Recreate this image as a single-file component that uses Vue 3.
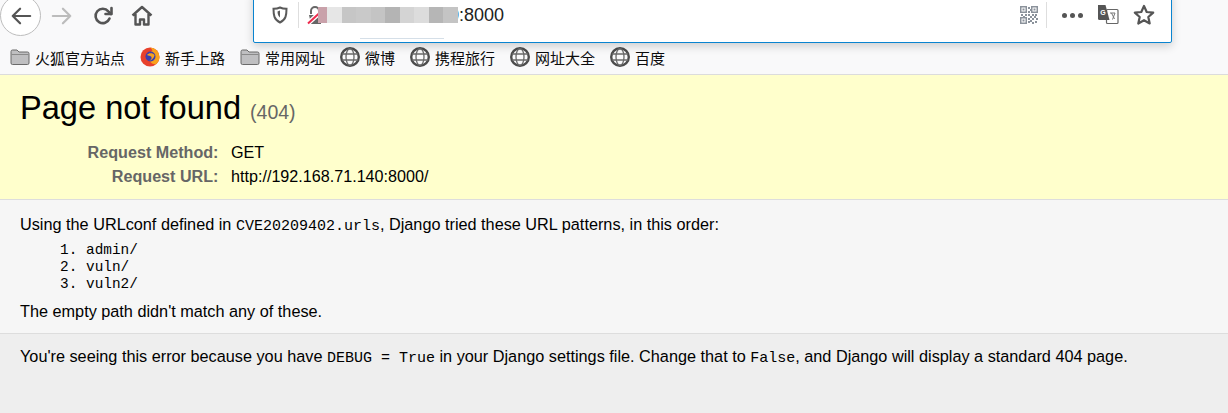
<script setup>
const bookmarks = [
  { label: '火狐官方站点', icon: 'folder' },
  { label: '新手上路', icon: 'fx' },
  { label: '常用网址', icon: 'folder' },
  { label: '微博', icon: 'globe' },
  { label: '携程旅行', icon: 'globe' },
  { label: '网址大全', icon: 'globe' },
  { label: '百度', icon: 'globe' },
]
const blur = ['#e6e6e6','#c6c6c6','#c9c9c9','#c4c4c4','#b4b4b4','#d4d4d4','#dcdcdc','#b6b6b6','#c4c4c4']
const patterns = ['admin/', 'vuln/', 'vuln2/']
const qrNoise = [[8,1],[10,3],[8,5],[1,8],[3,10],[5,8],[8,8],[10,10],[12,8],[15,8],[8,12],[10,14],[8,15],[12,12],[14,10],[16,12],[12,16],[15,15]]
</script>

<template>
  <div class="page">
    <header class="chrome">
      <div class="navrow">
        <div class="back">
          <svg width="22" height="22" viewBox="0 0 24 24" fill="none" stroke="#555" stroke-width="2.400" stroke-linecap="round" stroke-linejoin="round"><path d="M22 12H3M11 4l-8 8 8 8"/></svg>
        </div>
        <svg class="fwd" width="22" height="22" viewBox="0 0 24 24" fill="none" stroke="#bcbcbc" stroke-width="2.400" stroke-linecap="round" stroke-linejoin="round"><path d="M2 12h19M13 4l8 8-8 8"/></svg>
        <svg class="reload" width="22" height="22" viewBox="0 0 22 22" fill="none" stroke="#555" stroke-width="2.600" stroke-linecap="round" stroke-linejoin="round"><path d="M17.500 13.500a7.200 7.200 0 1 1-1.200-7.200L19 9"/><path d="M19.500 3v6h-6"/></svg>
        <svg class="home" width="22" height="22" viewBox="0 0 22 22" fill="none" stroke="#555" stroke-width="2.400" stroke-linejoin="round"><path d="M1.500 10.500 11 2l9.500 8.500M4.500 9v10.500h4.500v-5h4v5h4.500V9"/></svg>
      </div>
      <div class="bookmarks">
        <div v-for="b in bookmarks" :key="b.label" class="bm">
          <svg v-if="b.icon === 'folder'" width="20" height="18" viewBox="0 0 20 18"><path d="M1 3.500a1.500 1.500 0 0 1 1.500-1.500h4.500l2 2h8.500a1.500 1.500 0 0 1 1.500 1.500v9.500a1.500 1.500 0 0 1-1.500 1.500h-15a1.500 1.500 0 0 1-1.500-1.500z" fill="#bfbfc1" stroke="#6a6a6a"/><path d="M1.500 6.500h17" stroke="#8a8a8a"/></svg>
          <svg v-else-if="b.icon === 'fx'" width="20" height="20" viewBox="0 0 20 20"><circle cx="10" cy="10" r="9.500" fill="#e8412c"/><path d="M10 .5a9.500 9.500 0 0 1 9.500 9.500c0 3-1.500 5.500-3.500 7.200-2 .5-5-.5-6-3.200 2 .5 4-.5 4-2.500S11 8 9 8.500c.5-2 1-3.500 3.500-5A8 8 0 0 0 10 .5z" fill="#f9a21b"/><circle cx="10.500" cy="9.500" r="5" fill="#3a3fb0"/><path d="M7 8c2-2.500 6-2 7.500 0-.5 3.500-3 5.500-6 5.500 2.500 0 4-2.500 2.500-4-1-1-2.500-.7-4-1.500z" fill="#f7a21f"/></svg>
          <svg v-else width="20" height="20" viewBox="0 0 20 20" fill="none"><circle cx="10" cy="10" r="8.800" stroke="#4c4c4c" stroke-width="2.400"/><ellipse cx="10" cy="10" rx="4" ry="8.500" stroke="#6a6a6a" stroke-width="1.300"/><path d="M2 7h16M2 13h16" stroke="#6a6a6a" stroke-width="1.300"/></svg>
          <span>{{ b.label }}</span>
        </div>
      </div>
    </header>

    <section class="summary">
      <h1>Page not found <span>(404)</span></h1>
      <table>
        <tbody>
          <tr><th>Request Method:</th><td>GET</td></tr>
          <tr><th>Request URL:</th><td>http://192.168.71.140:8000/</td></tr>
        </tbody>
      </table>
    </section>

    <section class="info">
      <p>Using the URLconf defined in <code>CVE20209402.urls</code>, Django tried these URL patterns, in this order:</p>
      <ol>
        <li v-for="p in patterns" :key="p">{{ p }}</li>
      </ol>
      <p class="empty">The empty path didn't match any of these.</p>
    </section>

    <section class="explanation">
      <p>You're seeing this error because you have <code>DEBUG = True</code> in your Django settings file. Change that to <code>False</code>, and Django will display a standard 404 page.</p>
    </section>

    <div class="urlbar">
      <svg class="shield" width="16" height="18" viewBox="0 0 16 18" fill="none"><path d="M8 1.500c2 1 4 1.300 6.500 1.300 0 6-.5 10.700-6.500 13.700-6-3-6.500-7.700-6.500-13.700 2.500 0 4.500-.3 6.500-1.300z" stroke="#5a5a5a" stroke-width="2"/><path d="M8 4.500v7c-1.500-1-2.500-3-2.500-6z" fill="#5a5a5a"/></svg>
      <span class="sep"></span>
      <span class="lock">
        <svg width="14" height="20" viewBox="0 0 14 20"><path d="M4 9V6a4 4 0 0 1 8 0v3" fill="none" stroke="#666" stroke-width="2"/><path d="M2 10h12v9H4z" fill="#666"/><path d="M1 18.500 13 7.500" stroke="#fff" stroke-width="4.500"/><path d="M1 18.500 13 7.500" stroke="#ee2a4c" stroke-width="2"/></svg>
      </span>
      <span class="blurred">
        <i class="tint"></i>
        <i v-for="(c, n) in blur" :key="n" :style="{ background: c }"></i>
      </span>
      <span class="host">0:8000</span>
      <span class="spacer"></span>
      <svg class="qr" width="18" height="18" viewBox="0 0 18 18">
        <g fill="none" stroke="#8b929b" stroke-width="1.500"><rect x=".75" y=".75" width="5.500" height="5.500"/><rect x="11.750" y=".75" width="5.500" height="5.500"/><rect x=".75" y="11.750" width="5.500" height="5.500"/></g>
        <g fill="#8b929b"><rect x="2.500" y="2.500" width="2" height="2"/><rect x="13.500" y="2.500" width="2" height="2"/><rect x="2.500" y="13.500" width="2" height="2"/>
          <rect v-for="(q, n) in qrNoise" :key="n" :x="q[0]" :y="q[1]" width="2" height="2"/>
        </g>
      </svg>
      <span class="sep"></span>
      <span class="dots"><i></i><i></i><i></i></span>
      <svg class="trans" width="22" height="22" viewBox="0 0 22 22"><rect x="9.500" y="5.500" width="11.500" height="14" rx="1" fill="#fff" stroke="#666" stroke-width="1.200"/><path d="M13 9h5l-2.500 6.500M14.500 9l3 6" stroke="#777" fill="none"/><path d="M1 1h7.500l4 15H2.500A1.500 1.500 0 0 1 1 14.500z" fill="#555"/><text x="3.200" y="11" font-size="7" font-weight="700" fill="#fff" font-family="Liberation Sans, sans-serif">G</text></svg>
      <svg class="star" width="22" height="22" viewBox="0 0 22 22" fill="none"><path d="M11 2l2.700 6 6.500.7-4.900 4.300 1.400 6.500L11 16.200 5.300 19.500 6.700 13 1.800 8.700 8.300 8z" stroke="#555" stroke-width="2.200" stroke-linejoin="round"/></svg>
      <span class="smudge"></span>
    </div>
  </div>
</template>

<style>
html, body { margin: 0; background: #eee; }
</style>

<style scoped>
.page {
  position: relative;
  height: 413px;
  overflow: hidden;
  font-family: "Liberation Sans", Arial, "Noto Sans CJK SC", sans-serif;
  color: #000;
  background: #eee;
}
.chrome {
  height: 75px;
  box-sizing: border-box;
  background: #f9f9fa;
  border-bottom: 1px solid #dcdcdc;
}
.navrow {
  height: 38px;
  display: flex;
  align-items: center;
}
.back {
  flex: none;
  width: 41px;
  height: 41px;
  margin-top: -7px;
  box-sizing: border-box;
  border: 1px solid #bdbdbd;
  border-radius: 50%;
  background: #fff;
  display: flex;
  align-items: center;
  justify-content: center;
}
.navrow svg { margin-top: -7px; }
.back svg { margin-top: 0; }
.fwd { margin-left: 10px; }
.reload { margin-left: 19px; }
.home { margin-left: 17px; }
.bookmarks {
  height: 38px;
  display: flex;
  align-items: center;
  padding-left: 10px;
  gap: 15px;
  font-size: 15px;
  color: #0c0c0d;
}
.bm { display: flex; align-items: center; gap: 5px; white-space: nowrap; }
.summary {
  height: 125px;
  box-sizing: border-box;
  padding: 12px 20px 0;
  background: #ffc;
  border-bottom: 1px solid #ddd;
}
h1 {
  margin: 0;
  font-size: 32.600px;
  font-weight: 400;
  line-height: 42px;
}
h1 span { font-size: 19.500px; color: #666; }
table { border-collapse: collapse; margin-top: 7px; font-size: 16.150px; }
th {
  width: 204px;
  box-sizing: border-box;
  padding: 0 5.500px 0 0;
  color: #666;
  text-align: right;
  font-weight: 700;
  height: 24px;
}
td { padding: 0 0 0 7px; }
.info {
  height: 134px;
  box-sizing: border-box;
  padding: 15px 20px 0;
  background: #f6f6f6;
  border-bottom: 1px solid #ddd;
  font-size: 16.250px;
}
p { margin: 0; line-height: 19px; white-space: nowrap; }
code { font-family: "Liberation Mono", "Courier New", monospace; font-size: 15px; }
ol {
  margin: 6px 0 0;
  padding-left: 66px;
  font-family: "Liberation Mono", "Courier New", monospace;
  font-size: 14.400px;
  line-height: 17px;
}
.empty { margin-top: 9px; }
.explanation {
  height: 79px;
  box-sizing: border-box;
  padding: 13px 20px 0;
  background: #eee;
  font-size: 16.250px;
}
.urlbar {
  position: absolute;
  left: 253px;
  top: -8px;
  width: 919px;
  height: 51px;
  box-sizing: border-box;
  padding: 0 16px 5px 18px;
  display: flex;
  align-items: center;
  background: #fff;
  border: 1px solid #0a84d0;
  border-radius: 2px;
  box-shadow: 0 3px 10px rgba(0, 0, 0, .18);
}
.shield { flex: none; }
.sep { flex: none; width: 1px; height: 26px; background: #dedede; margin-left: 10px; }
.lock { flex: none; display: flex; margin: 0 -3px 0 8px; }
.blurred { flex: none; display: flex; height: 16px; position: relative; z-index: 1; }
.blurred i { width: 14.500px; display: block; }
.blurred .tint { width: 9px; background: #c9a1aa; }
.host { font-size: 18px; color: #222; margin-left: -8.500px; }
.spacer { flex: 1; }
.qr { flex: none; margin-left: 1px; }
.qr + .sep { margin-left: 8px; }
.dots { flex: none; display: flex; gap: 3px; margin-left: 15px; }
.dots i { width: 5px; height: 5px; border-radius: 50%; background: #555; display: block; }
.trans { flex: none; margin-left: 14px; }
.star { flex: none; margin-left: 14px; }
.smudge {
  position: absolute;
  left: 106px;
  top: 45px;
  width: 84px;
  height: 1px;
  background: #d5dfe8;
}
</style>
